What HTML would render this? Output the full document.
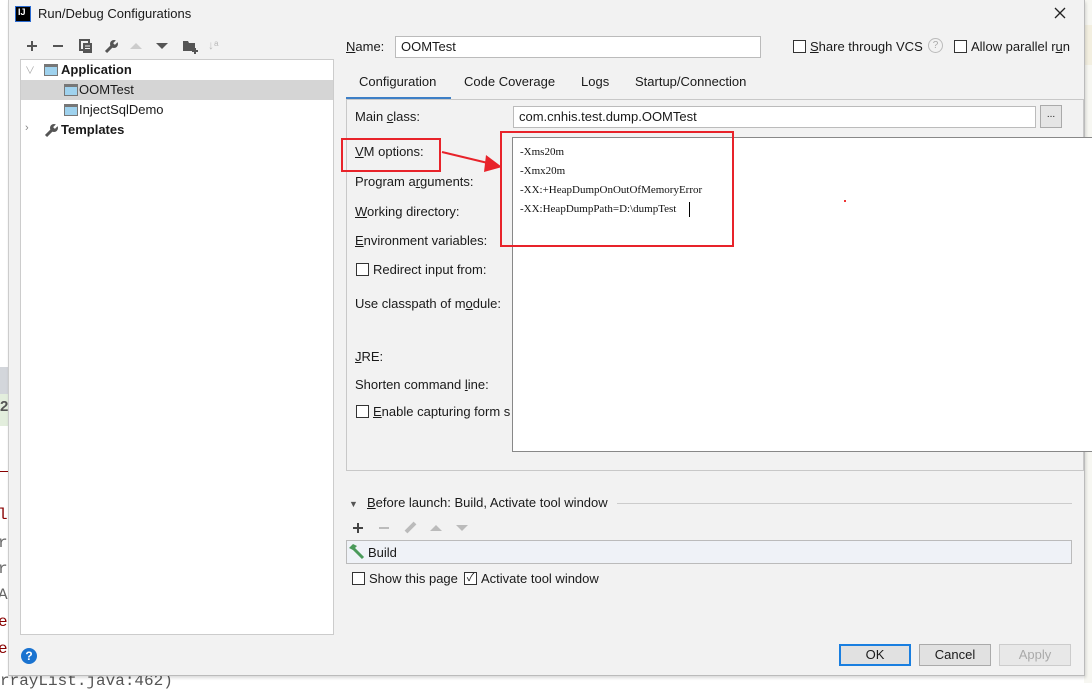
<!DOCTYPE html>
<html><head><meta charset="utf-8"><style>
*{box-sizing:border-box;margin:0;padding:0}
body{width:1092px;height:683px;overflow:hidden;background:#fff;font-family:"Liberation Sans","Noto Sans CJK SC",sans-serif;font-size:13px;color:#1a1a1a;position:relative}
.a{position:absolute;white-space:nowrap}
.cb{position:absolute;width:13px;height:13px;border:1px solid #333;background:#fff}
u{text-decoration:underline}
.mono{font-family:"Liberation Serif","Noto Serif CJK SC",serif;font-size:11px;color:#111}
</style></head><body>
<div class="a" style="left:0;top:367px;width:8px;height:27px;background:#d3d6db"></div>
<div class="a" style="left:0;top:394px;width:8px;height:32px;background:#e3eedd"></div>
<div class="a" style="left:0;top:398px;font-weight:bold;color:#555;font-size:15px">2</div>
<div class="a" style="left:0;top:471px;width:8px;height:1px;background:#800"></div>
<div class="a" style="left:-2px;top:506px;font-size:16px;color:#800;font-family:'Liberation Mono',monospace">l</div>
<div class="a" style="left:-2px;top:534px;font-size:16px;color:#666;font-family:'Liberation Mono',monospace">r</div>
<div class="a" style="left:-2px;top:560px;font-size:16px;color:#666;font-family:'Liberation Mono',monospace">r</div>
<div class="a" style="left:-2px;top:586px;font-size:16px;color:#666;font-family:'Liberation Mono',monospace">A</div>
<div class="a" style="left:-2px;top:613px;font-size:16px;color:#800;font-family:'Liberation Mono',monospace">e</div>
<div class="a" style="left:-2px;top:640px;font-size:16px;color:#800;font-family:'Liberation Mono',monospace">e</div>
<div class="a" style="left:0;top:672px;font-size:16px;color:#555;font-family:'Liberation Mono',monospace">rrayList.java:462)</div>
<div class="a" style="left:1084px;top:0;width:8px;height:683px;background:#f7f7f2"></div>
<div class="a" style="left:1084px;top:25px;width:8px;height:40px;background:#f3efe0"></div>

<div class="a" style="left:8px;top:0;width:1077px;height:676px;background:#f2f2f2;border-left:1px solid #ccc;border-right:1px solid #bbb;border-bottom:1px solid #bbb;box-shadow:1px 2px 3px rgba(0,0,0,.15)"></div>
<div class="a" style="left:15px;top:6px;width:16px;height:16px;background:#000;border:1px solid #2a6ad0;color:#fff;font-size:9px;font-weight:bold;line-height:10px;padding-left:2px">IJ</div>
<div class="a" style="left:38px;top:6px;font-size:13px">Run/Debug Configurations</div>
<svg class="a" style="left:1054px;top:7px" width="12" height="12"><path d="M1 1L11 11M11 1L1 11" stroke="#222" stroke-width="1.3"/></svg>

<!-- toolbar -->
<svg class="a" style="left:26px;top:40px" width="12" height="12"><path d="M6 1V11M1 6H11" stroke="#555" stroke-width="2"/></svg>
<svg class="a" style="left:52px;top:40px" width="12" height="12"><path d="M1 6H11" stroke="#555" stroke-width="2"/></svg>
<svg class="a" style="left:79px;top:39px" width="14" height="15"><rect x="1" y="1" width="9" height="10" fill="none" stroke="#555" stroke-width="2"/><rect x="4" y="4" width="9" height="10" fill="#555"/><path d="M6 7H11M6 9.5H11" stroke="#f2f2f2"/></svg>
<svg class="a" style="left:104px;top:39px" width="15" height="15"><path d="M2 13L8 7" stroke="#555" stroke-width="3"/><circle cx="10" cy="5" r="4" fill="#555"/><path d="M10 5L14 1" stroke="#f2f2f2" stroke-width="2.5"/></svg>
<svg class="a" style="left:130px;top:42px" width="12" height="8"><path d="M0 7L6 1L12 7Z" fill="#ccc"/></svg>
<svg class="a" style="left:156px;top:42px" width="12" height="8"><path d="M0 1L6 7L12 1Z" fill="#555"/></svg>
<svg class="a" style="left:182px;top:39px" width="16" height="15"><path d="M1 2H6L7 4H13V12H1Z" fill="#555"/><path d="M13 9V15M10 12H16" stroke="#555" stroke-width="2"/></svg>
<div class="a" style="left:208px;top:38px;font-size:12px;color:#bbb">↓ᵃ</div>

<!-- tree -->
<div class="a" style="left:20px;top:59px;width:314px;height:576px;background:#fff;border:1px solid #ccc"></div>
<div class="a" style="left:21px;top:80px;width:312px;height:20px;background:#d5d5d5"></div>
<div class="a" style="left:25px;top:62px;font-size:10px;color:#aaa">∨</div>
<div class="a" style="left:44px;top:64px;width:14px;height:12px;border:1px solid #777;border-top:3px solid #777;background:#9fd2ee"></div>
<div class="a" style="left:61px;top:62px;font-weight:bold">Application</div>
<div class="a" style="left:64px;top:84px;width:14px;height:12px;border:1px solid #777;border-top:3px solid #777;background:#9fd2ee"></div>
<div class="a" style="left:79px;top:82px">OOMTest</div>
<div class="a" style="left:64px;top:104px;width:14px;height:12px;border:1px solid #777;border-top:3px solid #777;background:#9fd2ee"></div>
<div class="a" style="left:79px;top:102px">InjectSqlDemo</div>
<div class="a" style="left:25px;top:122px;font-size:11px;color:#888">›</div>
<svg class="a" style="left:44px;top:123px" width="15" height="15"><path d="M2 13L8 7" stroke="#555" stroke-width="3"/><circle cx="10" cy="5" r="4" fill="#555"/><path d="M10 5L14 1" stroke="#fff" stroke-width="2.5"/></svg>
<div class="a" style="left:61px;top:122px;font-weight:bold">Templates</div>

<div class="a" style="left:346px;top:39px"><u>N</u>ame:</div>
<div class="a" style="left:395px;top:36px;width:366px;height:22px;background:#fff;border:1px solid #bbb;padding:2px 5px">OOMTest</div>
<div class="cb" style="left:793px;top:40px"></div>
<div class="a" style="left:810px;top:39px"><u>S</u>hare through VCS</div>
<div class="a" style="left:928px;top:38px;width:15px;height:15px;border:1px solid #bbb;border-radius:50%;font-size:10px;color:#aaa;text-align:center;line-height:13px">?</div>
<div class="cb" style="left:954px;top:40px"></div>
<div class="a" style="left:971px;top:39px">Allow parallel r<u>u</u>n</div>

<div class="a" style="left:359px;top:74px">Configuration</div>
<div class="a" style="left:464px;top:74px">Code Coverage</div>
<div class="a" style="left:581px;top:74px">Logs</div>
<div class="a" style="left:635px;top:74px">Startup/Connection</div>
<div class="a" style="left:346px;top:97px;width:105px;height:3px;background:#3d7fc6"></div>

<div class="a" style="left:346px;top:99px;width:738px;height:372px;border:1px solid #c8c8c8"></div>
<div class="a" style="left:355px;top:109px">Main <u>c</u>lass:</div>
<div class="a" style="left:513px;top:106px;width:523px;height:22px;background:#fff;border:1px solid #bbb;padding:2px 5px">com.cnhis.test.dump.OOMTest</div>
<div class="a" style="left:1040px;top:105px;width:22px;height:23px;background:#e5e5e5;border:1px solid #aaa;text-align:center;font-size:10px;line-height:18px">...</div>
<div class="a" style="left:355px;top:144px"><u>V</u>M options:</div>
<div class="a" style="left:355px;top:174px">Program a<u>r</u>guments:</div>
<div class="a" style="left:355px;top:204px"><u>W</u>orking directory:</div>
<div class="a" style="left:355px;top:233px"><u>E</u>nvironment variables:</div>
<div class="cb" style="left:356px;top:263px"></div>
<div class="a" style="left:373px;top:262px">Redirect input from:</div>
<div class="a" style="left:355px;top:296px">Use classpath of m<u>o</u>dule:</div>
<div class="a" style="left:355px;top:349px"><u>J</u>RE:</div>
<div class="a" style="left:355px;top:377px">Shorten command <u>l</u>ine:</div>
<div class="cb" style="left:356px;top:405px"></div>
<div class="a" style="left:373px;top:404px"><u>E</u>nable capturing form s</div>

<div class="a" style="left:512px;top:137px;width:580px;height:315px;background:#fff;border:1px solid #888;border-right:none"></div>
<div class="a mono" style="left:520px;top:146px">-Xms20m</div>
<div class="a mono" style="left:520px;top:165px">-Xmx20m</div>
<div class="a mono" style="left:520px;top:184px">-XX:+HeapDumpOnOutOfMemoryError</div>
<div class="a mono" style="left:520px;top:203px">-XX:HeapDumpPath=D:\dumpTest</div>
<div class="a" style="left:689px;top:202px;width:1px;height:15px;background:#000"></div>
<div class="a" style="left:844px;top:200px;width:2px;height:2px;background:#e33"></div>

<div class="a" style="left:341px;top:138px;width:100px;height:34px;border:2px solid #e8232a"></div>
<div class="a" style="left:500px;top:131px;width:234px;height:116px;border:2px solid #e8232a"></div>
<svg class="a" style="left:440px;top:145px" width="65" height="30"><line x1="2" y1="7" x2="52" y2="19" stroke="#e8232a" stroke-width="2"/><polygon points="62,22 46,10 44,27" fill="#e8232a"/></svg>

<div class="a" style="left:349px;top:499px;font-size:9px;color:#555">▼</div>
<div class="a" style="left:367px;top:495px"><u>B</u>efore launch: Build, Activate tool window</div>
<div class="a" style="left:617px;top:503px;width:455px;height:1px;background:#ccc"></div>
<svg class="a" style="left:352px;top:522px" width="12" height="12"><path d="M6 1V11M1 6H11" stroke="#444" stroke-width="2"/></svg>
<svg class="a" style="left:378px;top:522px" width="12" height="12"><path d="M1 6H11" stroke="#bbb" stroke-width="2"/></svg>
<svg class="a" style="left:404px;top:520px" width="14" height="14"><path d="M2 12L11 3" stroke="#bbb" stroke-width="4"/></svg>
<svg class="a" style="left:430px;top:524px" width="12" height="8"><path d="M0 7L6 1L12 7Z" fill="#bbb"/></svg>
<svg class="a" style="left:456px;top:524px" width="12" height="8"><path d="M0 1L6 7L12 1Z" fill="#bbb"/></svg>
<div class="a" style="left:346px;top:540px;width:726px;height:24px;background:#eff2f7;border:1px solid #bbb"></div>
<svg class="a" style="left:348px;top:543px" width="17" height="17"><path d="M5 5L15 15" stroke="#4a9a5a" stroke-width="3"/><path d="M1 5L5 1L9 3L5 7Z" fill="#4a9a5a"/></svg>
<div class="a" style="left:368px;top:545px">Build</div>
<div class="cb" style="left:352px;top:572px"></div>
<div class="a" style="left:369px;top:571px">Show this page</div>
<div class="cb" style="left:464px;top:572px;font-size:11px;line-height:11px;text-align:center">✓</div>
<div class="a" style="left:481px;top:571px">Activate tool window</div>

<div class="a" style="left:21px;top:648px;width:16px;height:16px;border-radius:50%;background:#1a73d0;color:#fff;font-size:12px;font-weight:bold;text-align:center;line-height:16px">?</div>
<div class="a" style="left:839px;top:644px;width:72px;height:22px;border:2px solid #1a7fe0;background:#e1e1e1;text-align:center;line-height:18px">OK</div>
<div class="a" style="left:919px;top:644px;width:72px;height:22px;border:1px solid #aaa;background:#e1e1e1;text-align:center;line-height:20px">Cancel</div>
<div class="a" style="left:999px;top:644px;width:72px;height:22px;border:1px solid #ccc;background:#e8e8e8;color:#aaa;text-align:center;line-height:20px">Apply</div>
</body></html>
